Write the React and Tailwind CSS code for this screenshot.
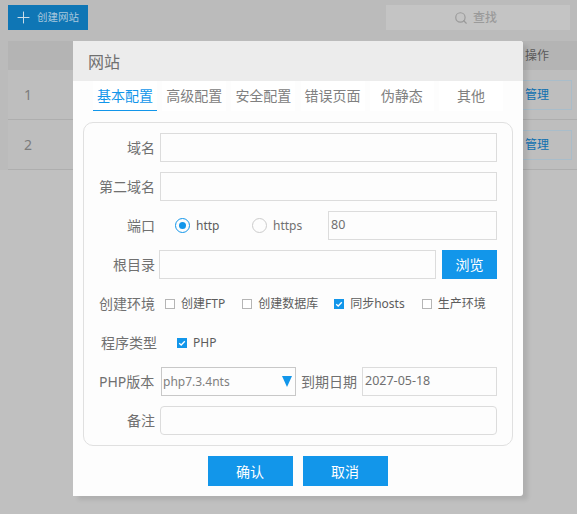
import { Plus, Search } from 'lucide-react'

const tabs = ['基本配置', '高级配置', '安全配置', '错误页面', '伪静态', '其他']

function Label({ children, className = '' }) {
  return <span className={`text-[14px] leading-none text-[#707070] whitespace-nowrap ${className}`}>{children}</span>
}

function Field({ className = '', children }) {
  return (
    <div className={`h-[29px] border border-[#dcdcdc] bg-[#fdfdfd] flex items-center pl-[2px] text-[12.5px] text-[#707070] ${className}`}>
      {children}
    </div>
  )
}

function Check({ checked, label, className = '' }) {
  return (
    <div className={`flex items-center gap-[6px] ${className}`}>
      {checked ? (
        <span className="w-[10px] h-[10px] bg-[#1296ea] flex items-center justify-center">
          <svg width="8" height="8" viewBox="0 0 8 8" fill="none">
            <path d="M1.2 4.2 3.2 6 6.8 2.2" stroke="#fff" strokeWidth="1.3" />
          </svg>
        </span>
      ) : (
        <span className="w-[10px] h-[10px] border border-[#b5b5b5] bg-white" />
      )}
      <span className="text-[12px] leading-none text-[#5c5c5c] whitespace-nowrap">{label}</span>
    </div>
  )
}

function Row({ name }) {
  return (
    <div className="h-[50px] flex items-center bg-[#bebebe] border-b border-[#aeaeae]">
      <span className="ml-4 text-[14px] text-[#7c7c7c]">{name}</span>
      <button className="ml-auto mr-[5px] w-[52px] h-[30px] border border-[#a9bdca] text-[12px] text-[#0e70b0] text-left pl-[4px]">管理</button>
    </div>
  )
}

export default function App() {
  return (
    <div
      className="relative w-[577px] h-[514px] overflow-hidden bg-[#c0c0c0]"
      style={{ fontFamily: '"Noto Sans", "Noto Sans CJK SC", sans-serif' }}
    >
      {/* Page behind the dialog */}
      <div className="bg-[#bbbbbb] h-[170px]">
        <div className="flex items-center justify-between pl-2 pr-[7px] pt-[5px]">
          <button className="w-20 h-[25px] bg-[#0f76b5] flex items-center pl-[6px] gap-[4px] text-[10.5px] text-[#a9c8dd]">
            <Plus className="w-[19px] h-[19px] text-[#d5e2ea]" strokeWidth={1.2} />
            创建网站
          </button>
          <div className="w-[184px] h-[25px] bg-[#c4c4c4] flex items-center pl-[68px] gap-[5px] text-[12px] font-medium text-[#9a9a9a]">
            <Search className="w-[14px] h-[14px]" strokeWidth={2} />
            查找
          </div>
        </div>
        <div className="mt-[11px] ml-2">
          <div className="h-[29px] bg-[#b4b4b4] flex items-center justify-end pr-[28px] text-[12px] text-[#5a5a5a]">操作</div>
          <Row name="1" />
          <Row name="2" />
        </div>
      </div>

      {/* Dialog */}
      <div className="absolute left-[73px] top-[41px] w-[450px] h-[455px] bg-[#fdfdfd] rounded-r-[3px] shadow-[5px_4px_4px_rgba(0,0,0,0.09)] flex flex-col">
        <div className="h-10 bg-[#ececec] rounded-tr-[3px] flex items-center pl-[15px] pt-[2px] text-[16px] text-[#707070]">网站</div>
        <div className="flex gap-[5.2px] pl-5 h-[30px]">
          {tabs.map((tab, i) => (
            <div
              key={tab}
              className={`w-[64px] flex items-center justify-center bg-white text-[14px] leading-none ${
                i === 0 ? 'text-[#1296ea] border-b border-[#1296ea]' : 'text-[#808080]'
              }`}
            >
              {tab}
            </div>
          ))}
        </div>

        <div className="mx-[10px] mt-[11px] h-[324px] border border-[#e0e0e0] rounded-[10px] pt-[10px] flex flex-col gap-[10px]">
          <div className="flex items-center h-[29px]">
            <Label className="w-[71px] text-right">域名</Label>
            <Field className="ml-[5px] w-[337px]" />
          </div>
          <div className="flex items-center h-[29px]">
            <Label className="w-[71px] text-right">第二域名</Label>
            <Field className="ml-[5px] w-[337px]" />
          </div>
          <div className="flex items-center h-[29px]">
            <Label className="w-[71px] text-right">端口</Label>
            <span className="ml-5 w-[15px] h-[15px] rounded-full border border-[#1296ea] flex items-center justify-center">
              <span className="w-[7px] h-[7px] rounded-full bg-[#1296ea]" />
            </span>
            <span className="ml-[6px] w-[22px] text-[12px] leading-none text-[#5c5c5c]">http</span>
            <span className="ml-[34px] w-[15px] h-[15px] rounded-full border border-[#ccc]" />
            <span className="ml-[6px] w-[28px] text-[12px] leading-none text-[#707070]">https</span>
            <Field className="ml-[27px] w-[169px]">80</Field>
          </div>
          <div className="flex items-center h-[29px]">
            <Label className="w-[71px] text-right">根目录</Label>
            <Field className="ml-[4px] w-[277px]" />
            <button className="ml-[6px] w-[55px] h-[29px] bg-[#1296ea] text-[14px] text-white">浏览</button>
          </div>
          <div className="flex items-center h-[29px]">
            <Label className="ml-[15px]">创建环境</Label>
            <Check className="ml-[10px]" label="创建FTP" />
            <Check className="ml-[17px]" label="创建数据库" />
            <Check className="ml-4" checked label="同步hosts" />
            <Check className="ml-[17px]" label="生产环境" />
          </div>
          <div className="flex items-center h-[29px]">
            <Label className="ml-[17px]">程序类型</Label>
            <Check className="ml-5" checked label="PHP" />
          </div>
          <div className="flex items-center h-[29px]">
            <Label className="ml-[15px] w-[57px]">PHP版本</Label>
            <div className="ml-[5px] w-[135px] h-[29px] border border-[#c8c8c8] bg-[#fdfdfd] flex items-center pl-[1px] pr-[3px] justify-between text-[12px] text-[#808080]">
              php7.3.4nts
              <span className="w-0 h-0 border-l-[5.5px] border-r-[5.5px] border-t-[11px] border-l-transparent border-r-transparent border-t-[#1296ea]" />
            </div>
            <Label className="ml-[5px] w-[56px]">到期日期</Label>
            <Field className="ml-[5px] w-[135px]">2027-05-18</Field>
          </div>
          <div className="flex items-center h-[29px]">
            <Label className="w-[71px] text-right">备注</Label>
            <Field className="ml-[5px] w-[337px] rounded-[4px]" />
          </div>
        </div>

        <div className="flex justify-center gap-[10px] mt-[10px] pr-[1px]">
          <button className="w-[85px] h-[30px] bg-[#1296ea] text-[14px] text-white">确认</button>
          <button className="w-[85px] h-[30px] bg-[#1296ea] text-[14px] text-white">取消</button>
        </div>
      </div>
    </div>
  )
}
